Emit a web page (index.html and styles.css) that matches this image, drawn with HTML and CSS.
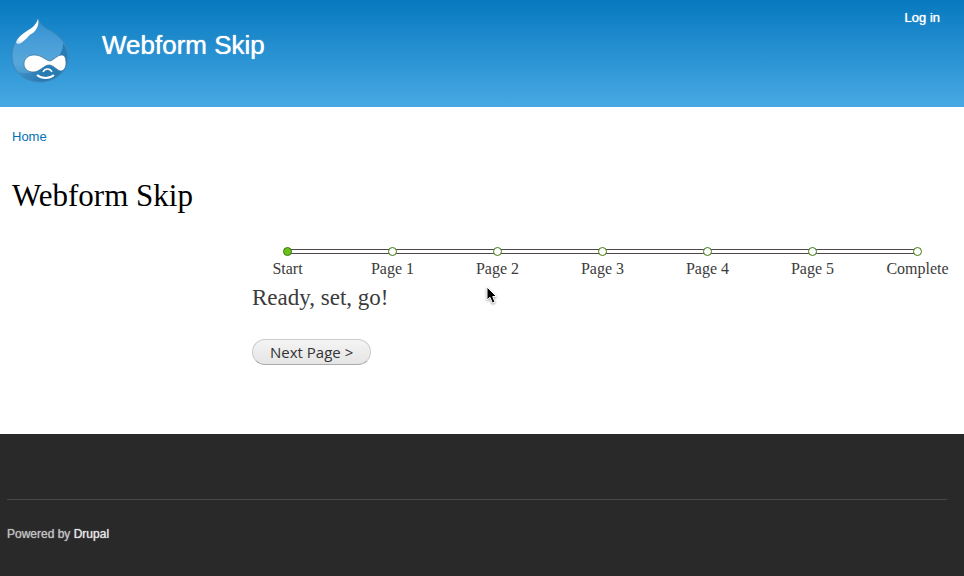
FILE: index.html
```html
<!DOCTYPE html>
<html lang="en">
<head>
<meta charset="utf-8">
<title>Webform Skip</title>
<link rel="stylesheet" href="styles.css">
</head>
<body>
<header class="header">
  <a class="logo" href="#" aria-label="Home">
    <svg width="60" height="66" viewBox="0 0 60 66">
      <defs>
        <linearGradient id="drop" x1="0" y1="0" x2="0" y2="1">
          <stop offset="0" stop-color="#2f8fd0"/>
          <stop offset="0.4" stop-color="#4a9fd8"/>
          <stop offset="0.7" stop-color="#57a7da"/>
          <stop offset="1" stop-color="#4190c5"/>
        </linearGradient>
        <linearGradient id="shade" x1="0" y1="0" x2="1" y2="0">
          <stop offset="0" stop-color="#1c70aa" stop-opacity="0.2"/>
          <stop offset="0.5" stop-color="#1c70aa" stop-opacity="0.75"/>
          <stop offset="1" stop-color="#1c70aa" stop-opacity="0.75"/>
        </linearGradient>
        <linearGradient id="shine" x1="1" y1="0" x2="0" y2="1">
          <stop offset="0" stop-color="#fff"/>
          <stop offset="0.8" stop-color="#fff"/>
          <stop offset="1" stop-color="#b5daf3"/>
        </linearGradient>
      </defs>
      <path d="M29 2C31 8 36 11 42 14C52 20 59 28 59 40C59 54 47 65 31 65C15 65 3 54 3 39C3 30 7 22 14 17C21 12 27 10 29 2Z" fill="url(#drop)" stroke="#4187b6"/>
      <path d="M54 26C57 30 58.500 35 58.500 40C58.500 54 47 64.500 31 64.500C22 64.500 14 61 9 55C17 58 32 55 40 44C50 42 54 35 54 26Z" fill="url(#shade)"/>
      <path d="M29 2C27 9 21 12 15 16C11 19 8 22 7 25C8 29 13 26 18 21C21 17 23 17 25 15C29 11 30 6 29 2Z" fill="url(#shine)"/>
      <path d="M25 38C33 38 36 43 41 44C45 43 48 38 53 38C56 38 57 42 57 46C57 50 55 54 52 54C48 54 45 48 40 48C35 48 31 55 24 55C18 55 15 51 15 47C15 42 19 38 25 38Z" fill="#fff" stroke="#39709a" stroke-width=".7"/>
      <path d="M34 55C36 51 41 51 43 55" fill="none" stroke="#fff" stroke-width="1.500"/>
      <path d="M28 58C33 62 40 62 45 58" fill="none" stroke="#fff" stroke-width="2"/>
    </svg>
  </a>
  <a class="site-name" href="#">Webform Skip</a>
  <a class="login" href="#">Log in</a>
</header>
<main class="main">
  <nav class="breadcrumb" aria-label="Breadcrumb"><a href="#">Home</a></nav>
  <h1 class="title">Webform Skip</h1>
  <ol class="steps">
    <li class="step current">Start</li>
    <li class="step">Page 1</li>
    <li class="step">Page 2</li>
    <li class="step">Page 3</li>
    <li class="step">Page 4</li>
    <li class="step">Page 5</li>
    <li class="step">Complete</li>
  </ol>
  <form class="form">
    <p class="message">Ready, set, go!</p>
    <button class="next" type="button">Next Page &gt;</button>
  </form>
</main>
<footer class="footer">
  <p class="powered">Powered by <a href="#">Drupal</a></p>
</footer>
<svg class="cursor" width="13" height="20" viewBox="0 0 13 20" aria-hidden="true">
  <path d="M1 1V14L4 11.300L6.300 17L9 16L6.700 10.500H10.500Z" fill="#000" stroke="#fff" stroke-width="1"/>
</svg>
</body>
</html>
```
FILE: styles.css
```css
*, *::before, *::after { box-sizing: border-box; }
body {
  margin: 0;
  min-height: 100vh;
  display: flex;
  flex-direction: column;
  background: #292929;
  color: #3b3b3b;
  font-family: Georgia, "Liberation Serif", serif;
}
a { color: inherit; text-decoration: none; }
.header {
  display: flex;
  align-items: flex-start;
  height: 107px;
  padding: 0 24px 0 9px;
  background: linear-gradient(#0779bf, #48a9e4);
  color: #fff;
  font-family: "Liberation Sans", sans-serif;
}
.logo { margin-top: 17px; }
.logo svg { display: block; }
.site-name {
  margin: 30px auto 0 33px;
  font-size: 26px;
  line-height: 30px;
  text-shadow: 0 0 1px #fff;
}
.login {
  margin-top: 10px;
  font-size: 13px;
  line-height: 16px;
  text-shadow: 0 0 1px #fff;
}
.main {
  min-height: 327px;
  overflow: hidden;
  background: #fff;
}
.breadcrumb {
  margin: 22px 12px 0;
  color: #0071b3;
  font: 13px/16px "Liberation Sans", sans-serif;
}
.title {
  margin: 32px 12px 0;
  color: #000;
  font-size: 31px;
  font-weight: normal;
  line-height: 38px;
}
.steps {
  display: grid;
  grid-template-columns: repeat(7, 1fr);
  margin: 31px -6px 0 235px;
  padding: 0;
  list-style: none;
}
.step {
  position: relative;
  font-size: 16px;
  line-height: 20px;
  text-align: center;
}
.step::before {
  content: "";
  display: block;
  position: relative;
  z-index: 1;
  width: 9px;
  height: 9px;
  margin: 1px auto 3px;
  border: 1px solid #3c7a0c;
  border-radius: 50%;
  background: #fff;
}
.step.current::before { background: #6cc01c; }
.step + .step::after {
  content: "";
  position: absolute;
  top: 3px;
  right: 50%;
  width: 100%;
  height: 5px;
  border: solid #4f474b;
  border-width: 1px 0;
}
.form { margin: 6px 12px 0 252px; }
.message {
  margin: 0 0 28px;
  font-size: 23px;
  line-height: 26px;
}
.next {
  display: block;
  height: 26px;
  padding: 0 17px;
  border: 1px solid #ccc;
  border-bottom-color: #aaa;
  border-radius: 13px;
  background: linear-gradient(#f4f4f4, #e5e5e5);
  color: #333;
  font: 15px/22px "Open Sans", sans-serif;
}
.footer {
  padding: 65px 17px 32px 7px;
  color: #bfbfbf;
  font-family: "Liberation Sans", sans-serif;
}
.powered {
  margin: 0;
  padding-top: 26px;
  border-top: 1px solid #484848;
  font-size: 12px;
  line-height: 16px;
  text-shadow: 0 0 1px currentColor;
}
.powered a { color: #e6e6e6; }
.cursor {
  position: absolute;
  top: 286px;
  left: 486px;
  filter: drop-shadow(0 1px 1px #0006);
}
```
